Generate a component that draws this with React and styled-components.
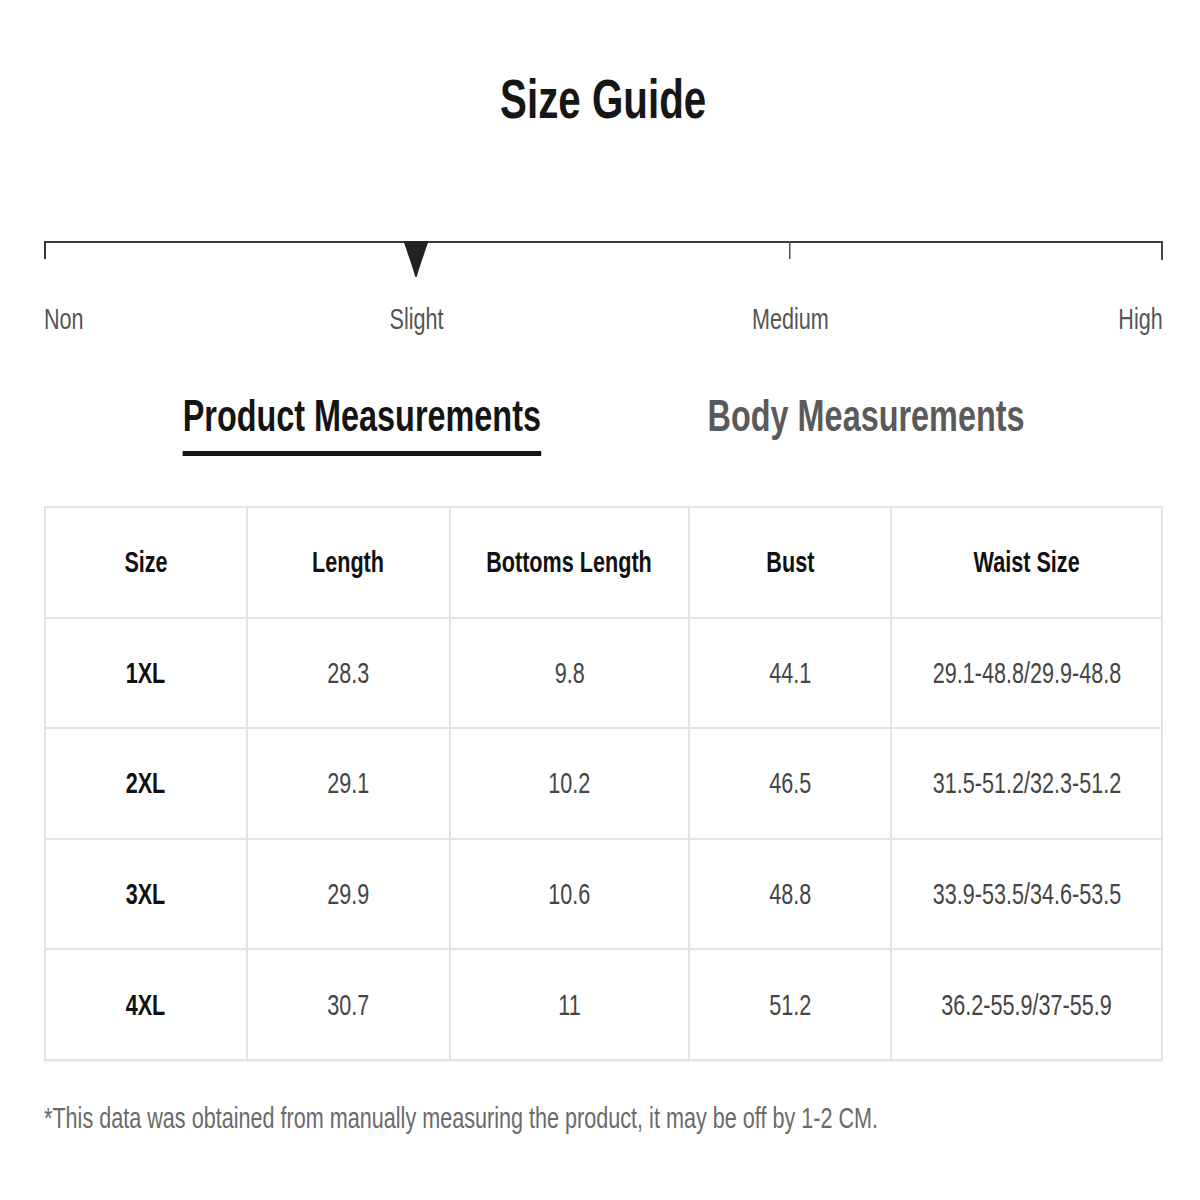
import React from "react";
import styled, { createGlobalStyle } from "styled-components";

const Global = createGlobalStyle`
  html, body { margin: 0; padding: 0; background: #fff; }
  body { font-family: "Liberation Sans", Arial, sans-serif; }
`;

const Page = styled.div`
  width: 1200px;
  box-sizing: border-box;
  padding: 71px 37px 60px 44px;
  background: #fff;
  font-family: "Liberation Sans", Arial, sans-serif;
`;

const Squeeze = styled.span`
  display: inline-block;
  white-space: nowrap;
  transform: scaleX(0.72);
  transform-origin: ${(p) => p.$origin || "center"};
`;

const Title = styled.h1`
  margin: 0;
  font-size: 56px;
  line-height: 56px;
  font-weight: 700;
  color: #161616;
  text-align: center;
`;

const ScaleBar = styled.svg`
  display: block;
  margin-top: 114px;
  width: 1119px;
  height: 38px;
`;

const LabelRow = styled.div`
  display: flex;
  justify-content: space-between;
  margin-top: 25px;
  height: 30px;
`;

const Label = styled.div`
  width: 0;
  display: flex;
  justify-content: ${(p) => p.$justify};
  font-size: 30px;
  line-height: 30px;
  color: #555;
  white-space: nowrap;
`;

const TabRow = styled.div`
  display: flex;
  justify-content: center;
  gap: 170px;
  margin-top: 59px;
`;

const Tab = styled.div`
  width: ${(p) => p.$w}px;
  display: flex;
  justify-content: center;
  font-size: 45px;
  line-height: 45px;
  font-weight: 700;
  color: ${(p) => (p.$active ? "#141414" : "#5a5a5a")};
`;

const TabText = styled(Squeeze)`
  padding-bottom: 13px;
  border-bottom: 5px solid ${(p) => (p.$active ? "#141414" : "transparent")};
`;

const Grid = styled.div`
  margin-top: 50px;
  display: grid;
  grid-template-columns: 202fr 203fr 240fr 202fr 272fr;
  grid-auto-rows: 108.6px;
  gap: 2px;
  padding: 2px;
  background: #e3e3e3;
  box-shadow: 0 1px 1px rgba(0, 0, 0, 0.06);
`;

const Cell = styled.div`
  background: #fff;
  display: flex;
  align-items: center;
  justify-content: center;
  font-size: 30px;
  line-height: 30px;
  font-weight: ${(p) => (p.$strong ? 700 : 400)};
  color: ${(p) => (p.$strong ? "#111" : "#454545")};
`;

const Note = styled.p`
  margin: 42px 0 0;
  font-size: 30px;
  line-height: 30px;
  color: #6a6a6a;
`;

const headers = ["Size", "Length", "Bottoms Length", "Bust", "Waist Size"];
const rows = [
  ["1XL", "28.3", "9.8", "44.1", "29.1-48.8/29.9-48.8"],
  ["2XL", "29.1", "10.2", "46.5", "31.5-51.2/32.3-51.2"],
  ["3XL", "29.9", "10.6", "48.8", "33.9-53.5/34.6-53.5"],
  ["4XL", "30.7", "11", "51.2", "36.2-55.9/37-55.9"],
];

const labels = [
  { text: "Non", justify: "flex-start", origin: "left" },
  { text: "Slight", justify: "center", origin: "center" },
  { text: "Medium", justify: "center", origin: "center" },
  { text: "High", justify: "flex-end", origin: "right" },
];

export default function App() {
  return (
    <>
      <Global />
      <Page>
        <Title>
          <Squeeze>Size Guide</Squeeze>
        </Title>

        <ScaleBar viewBox="0 0 1119 38">
          <rect x="0" y="0" width="1119" height="2" fill="#3a3a3a" />
          <rect x="0" y="0" width="2" height="18" fill="#333" />
          <rect x="745" y="0" width="1.5" height="18" fill="#555" />
          <rect x="1117" y="0" width="2" height="19" fill="#444" />
          <path
            d="M359.5,0 H384.5 C381,11 376,24 373,35 Q372,37.5 371,35 C368,24 363,11 359.5,0 Z"
            fill="#222"
          />
        </ScaleBar>

        <LabelRow>
          {labels.map((l) => (
            <Label key={l.text} $justify={l.justify}>
              <Squeeze $origin={l.origin}>{l.text}</Squeeze>
            </Label>
          ))}
        </LabelRow>

        <TabRow>
          <Tab $w={356} $active>
            <TabText $active>Product Measurements</TabText>
          </Tab>
          <Tab $w={313}>
            <TabText>Body Measurements</TabText>
          </Tab>
        </TabRow>

        <Grid>
          {headers.map((h) => (
            <Cell key={h} $strong>
              <Squeeze>{h}</Squeeze>
            </Cell>
          ))}
          {rows.map((r) =>
            r.map((v, i) => (
              <Cell key={r[0] + i} $strong={i === 0}>
                <Squeeze>{v}</Squeeze>
              </Cell>
            ))
          )}
        </Grid>

        <Note>
          <Squeeze $origin="left">
            *This data was obtained from manually measuring the product, it may be off by 1-2 CM.
          </Squeeze>
        </Note>
      </Page>
    </>
  );
}
